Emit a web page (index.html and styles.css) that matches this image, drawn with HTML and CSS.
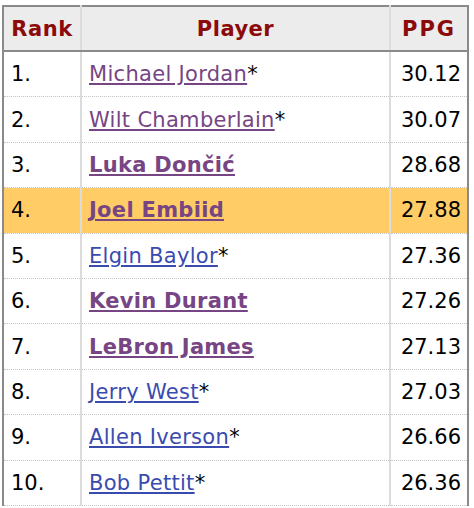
FILE: index.html
```html
<!DOCTYPE html>
<html>
<head>
<meta charset="utf-8">
<link rel="stylesheet" href="styles.css">
</head>
<body>
<table class="stats">
  <thead>
    <tr><th class="c-rank">Rank</th><th class="c-player">Player</th><th class="c-ppg">PPG</th></tr>
  </thead>
  <tbody>
    <tr><td>1.</td><td><a class="visited" href="#">Michael Jordan</a>*</td><td class="num">30.12</td></tr>
    <tr><td>2.</td><td><a class="visited" href="#">Wilt Chamberlain</a>*</td><td class="num">30.07</td></tr>
    <tr><td>3.</td><td><a class="visited active" href="#">Luka Dončić</a></td><td class="num">28.68</td></tr>
    <tr class="hl"><td>4.</td><td><a class="visited active" href="#">Joel Embiid</a></td><td class="num">27.88</td></tr>
    <tr><td>5.</td><td><a href="#">Elgin Baylor</a>*</td><td class="num">27.36</td></tr>
    <tr><td>6.</td><td><a class="visited active" href="#">Kevin Durant</a></td><td class="num">27.26</td></tr>
    <tr><td>7.</td><td><a class="visited active" href="#">LeBron James</a></td><td class="num">27.13</td></tr>
    <tr><td>8.</td><td><a href="#">Jerry West</a>*</td><td class="num">27.03</td></tr>
    <tr><td>9.</td><td><a href="#">Allen Iverson</a>*</td><td class="num">26.66</td></tr>
    <tr><td>10.</td><td><a href="#">Bob Pettit</a>*</td><td class="num">26.36</td></tr>
  </tbody>
</table>
</body>
</html>
```
FILE: styles.css
```css
html, body {
  margin: 0;
  padding: 0;
  background: #fff;
}
body {
  padding: 5px 0 0 2px;
  font-family: "DejaVu Sans", Verdana, sans-serif;
  font-size: 21px;
  color: #000;
}
.stats {
  border-collapse: collapse;
  width: 467px;
  border: 2px solid #8a8a8a;
  border-bottom: none;
  table-layout: fixed;
}
.stats th {
  background: #ececec;
  color: #8b0a0a;
  font-weight: bold;
  height: 43px;
  padding: 0 7px;
  text-align: center;
  letter-spacing: 0.5px;
  border-bottom: 2px solid #8a8a8a;
  border-left: 2px solid #dcdcdc;
}
.stats th.c-ppg { letter-spacing: 2px; }
.stats th:first-child, .stats td:first-child { border-left: none; }
.c-rank { width: 62px; }
.c-ppg { width: 62px; }
.stats td {
  height: 44.4px;
  padding: 0 7px;
  border-bottom: 1px dotted #c4c4c4;
  border-left: 2px solid #dcdcdc;
  white-space: nowrap;
}
.stats td.num { text-align: right; padding-right: 6px; }
.stats tr.hl td { background: #ffcc66; }
.stats a { color: #3a4bb0; text-decoration: underline; letter-spacing: 0.3px; }
.stats a.visited { color: #774583; }
.stats a.active { font-weight: bold; letter-spacing: 0.3px; }
```
